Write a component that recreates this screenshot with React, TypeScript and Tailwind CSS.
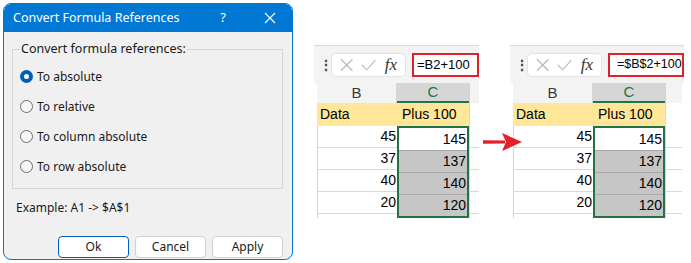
import React from "react";

const dlgFont = { fontFamily: '"Noto Sans", "Open Sans", sans-serif' };
const xlFont = { fontFamily: '"Liberation Sans", Arial, sans-serif' };

function Radio({ checked, label }: { checked?: boolean; label: string }) {
  return (
    <div className="h-[30px] flex items-center gap-[4px] text-[12px] text-[#1a1a1a]">
      {checked ? (
        <span className="w-[13px] h-[13px] rounded-full bg-[#005fb8] flex items-center justify-center">
          <span className="w-[5px] h-[5px] rounded-full bg-white" />
        </span>
      ) : (
        <span className="w-[13px] h-[13px] rounded-full border border-[#6b6b6b] bg-[#f7f7f7]" />
      )}
      <span>{label}</span>
    </div>
  );
}

function Btn({ label, primary }: { label: string; primary?: boolean }) {
  return (
    <div
      className={
        "w-[71px] h-[22px] rounded-[4px] bg-white flex items-center justify-center text-[12px] text-[#1a1a1a] " +
        (primary ? "border border-[#005fb8]" : "border border-[#d0d0d0]")
      }
    >
      {label}
    </div>
  );
}

function Dialog() {
  return (
    <div
      className="ml-[3px] mt-[3px] w-[290px] h-[257px] rounded-[8px] border border-[#0078d4] bg-[#f0f0f0] overflow-hidden flex flex-col"
      style={dlgFont}
    >
      <div className="h-[28px] bg-[#0078d4] text-white flex items-center pl-[9px] text-[12.5px]">
        <span>Convert Formula References</span>
        <span className="ml-auto mr-[38px] text-[13px]">?</span>
        <svg width="12" height="12" viewBox="0 0 12 12" className="mr-[16px]">
          <path d="M1 1L11 11M11 1L1 11" stroke="white" strokeWidth="1.1" />
        </svg>
      </div>
      <div className="flex-1 flex flex-col pl-[8px] pr-[9px]">
        <fieldset className="mt-[8px] h-[149px] border border-[#d6d6d6] px-[7px]">
          <legend className="px-[1px] text-[12.5px] text-[#1a1a1a]">Convert formula references:</legend>
          <div className="pt-[3px] flex flex-col">
            <Radio checked label="To absolute" />
            <Radio label="To relative" />
            <Radio label="To column absolute" />
            <Radio label="To row absolute" />
          </div>
        </fieldset>
        <div className="mt-[10px] ml-[4px] text-[12px] text-[#1a1a1a] h-[18px] leading-[18px]">
          Example: A1 -&gt; $A$1
        </div>
        <div className="mt-[19px] flex justify-end gap-[6px]">
          <Btn label="Ok" primary />
          <Btn label="Cancel" />
          <Btn label="Apply" />
        </div>
      </div>
    </div>
  );
}

const rows = [
  ["45", "145"],
  ["37", "137"],
  ["40", "140"],
  ["20", "120"],
];

function Sheet({
  formula,
  boxW,
  boxCls,
  extraW,
  ml,
}: {
  formula: string;
  boxW: number;
  boxCls: string;
  extraW: string;
  ml: string;
}) {
  return (
    <div className={"mt-[45px] flex flex-col " + ml} style={xlFont}>
      <div className="h-[38px] bg-[#f3f3f3] border-t border-[#dadada] flex items-center pl-[5px]">
        <span className="text-[#444] text-[14px] font-bold leading-none w-[8px]">⋮</span>
        <div className="ml-[4px] w-[75px] h-[24px] rounded-[5px] bg-white border border-[#e3e3e3] flex items-center px-[8px] gap-[8px]">
          <svg width="14" height="14" viewBox="0 0 14 14">
            <path d="M1 1L13 13M13 1L1 13" stroke="#b8b8b8" strokeWidth="1.2" />
          </svg>
          <svg width="16" height="14" viewBox="0 0 16 14">
            <path d="M1 7L6 12L15 2" stroke="#b8b8b8" strokeWidth="1.2" fill="none" />
          </svg>
          <span
            className="ml-auto text-[17px] italic text-[#333] leading-none"
            style={{ fontFamily: '"Liberation Serif", serif' }}
          >
            fx
          </span>
        </div>
        <div
          className={"ml-[6px] h-[24px] bg-white border-2 border-[#e0202a] flex items-center text-black whitespace-nowrap " + boxCls}
          style={{ width: boxW }}
        >
          {formula}
        </div>
      </div>
      <div className="flex h-[20px] text-[15px]">
        <div className="w-[3px] bg-white" />
        <div className="w-[80px] bg-[#f3f3f3] flex items-center justify-center text-[#3a3a3a] border-r border-[#d4d4d4]">B</div>
        <div className="w-[72px] bg-[#d6d6d6] flex items-center justify-center text-[#217346] border-b-2 border-[#217346]">C</div>
        <div className={"bg-[#f3f3f3] border-l border-[#d4d4d4] " + extraW} />
      </div>
      <div className="flex">
        <div className="w-[3px]" />
        <div className="flex flex-col">
          <div className="flex h-[23px] text-[14px] text-black">
            <div className="w-[80px] bg-[#ffe699] flex items-center pl-[3px]">Data</div>
            <div className="w-[72px] bg-[#ffe699] flex items-center pl-[5px]">Plus 100</div>
          </div>
          <div className="flex border-l border-[#d4d4d4]">
            <div className="w-[80px] flex flex-col">
              {rows.map((r, i) => (
                <div key={i} className="h-[22px] border-b border-[#d9d9d9] flex items-center justify-end pr-[2px] text-[14px] text-black">
                  {r[0]}
                </div>
              ))}
            </div>
            <div className="w-[72px] -ml-[1px] flex flex-col border-2 border-[#217346]">
              {rows.map((r, i) => (
                <div
                  key={i}
                  className={
                    "h-[22px] flex items-center justify-end pr-[1px] text-[14px] text-black " +
                    (i === 0 ? "bg-white" : "bg-[#c6c6c6] border-t border-[#a8a8a8]")
                  }
                >
                  {r[1]}
                </div>
              ))}
            </div>
          </div>
        </div>
        <div className={"border-l border-[#d9d9d9] " + extraW}>
          {rows.map((_, i) => (
            <div key={i} className="h-[22px] border-b border-[#d9d9d9] first:mt-[23px]" />
          ))}
        </div>
      </div>
    </div>
  );
}

export default function App() {
  return (
    <div className="relative w-[691px] h-[263px] bg-white flex items-start overflow-hidden">
      <Dialog />
      <Sheet formula="=B2+100" boxW={67} boxCls="pl-[3px] text-[13px]" extraW="w-[10px]" ml="ml-[21px]" />
      <Sheet formula="=$B$2+100" boxW={76} boxCls="pl-[7px] text-[12.5px]" extraW="w-[17px]" ml="ml-[31px]" />
      <svg className="absolute left-[483px] top-[132px]" width="40" height="20" viewBox="0 0 40 20">
        <path d="M0 8.2L22 8.6L22 11.4L0 11.8Z" fill="#e4202a" />
        <path d="M19 1L39 10L19 19L23 10Z" fill="#e4202a" />
      </svg>
    </div>
  );
}
